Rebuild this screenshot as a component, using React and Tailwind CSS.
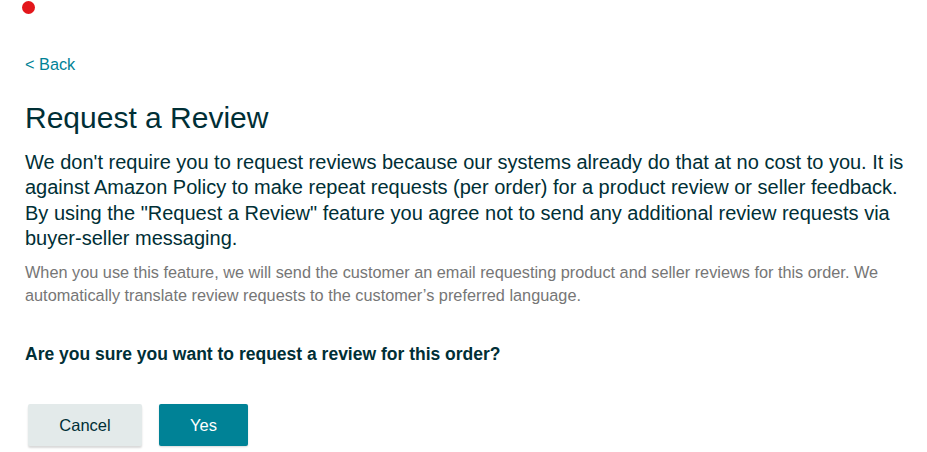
import React from 'react';

const App = () => {
  return (
    <div className="relative min-h-[452px] bg-white text-[#0f1111]" style={{ fontFamily: '"Liberation Sans", Arial, sans-serif' }}>
      {/* status dot */}
      <div className="absolute left-[22px] top-[1px] h-[13px] w-[13px] rounded-full bg-[#e3161b]"></div>

      <div className="px-[25px] pt-[55px]">
        <a href="#" className="block text-[16.3px] leading-[19px] text-[#008296]">&lt; Back</a>

        <h1 className="mt-[26px] text-[30px] leading-[36px] text-[#002f36]">Request a Review</h1>

        <p className="mt-[14px] w-[882px] text-[20px] leading-[25.3px] text-[#002f36]">
          We don't require you to request reviews because our systems already do that at no cost to you. It is
          against Amazon Policy to make repeat requests (per order) for a product review or seller feedback.
          By using the "Request a Review" feature you agree not to send any additional review requests via
          buyer-seller messaging.
        </p>

        <p className="mt-[10px] w-[866px] text-[16.3px] leading-[23px] text-[#767676]">
          When you use this feature, we will send the customer an email requesting product and seller reviews for this order. We
          automatically translate review requests to the customer’s preferred language.
        </p>

        <p className="mt-[36px] text-[17.5px] font-bold leading-[22px] text-[#002f36]">
          Are you sure you want to request a review for this order?
        </p>

        <div className="mt-[39px] flex gap-[17px] pl-[3px]">
          <button className="h-[42px] w-[114px] rounded-[2px] bg-[#e3eaea] text-[16.5px] text-[#002f36] shadow-[0_2px_2px_rgba(0,0,0,0.15)]">
            Cancel
          </button>
          <button className="h-[42px] w-[89px] rounded-[2px] bg-[#008296] text-[16.5px] text-white shadow-[0_1px_2px_rgba(0,0,0,0.15)]">
            Yes
          </button>
        </div>
      </div>
    </div>
  );
};

export default App;
